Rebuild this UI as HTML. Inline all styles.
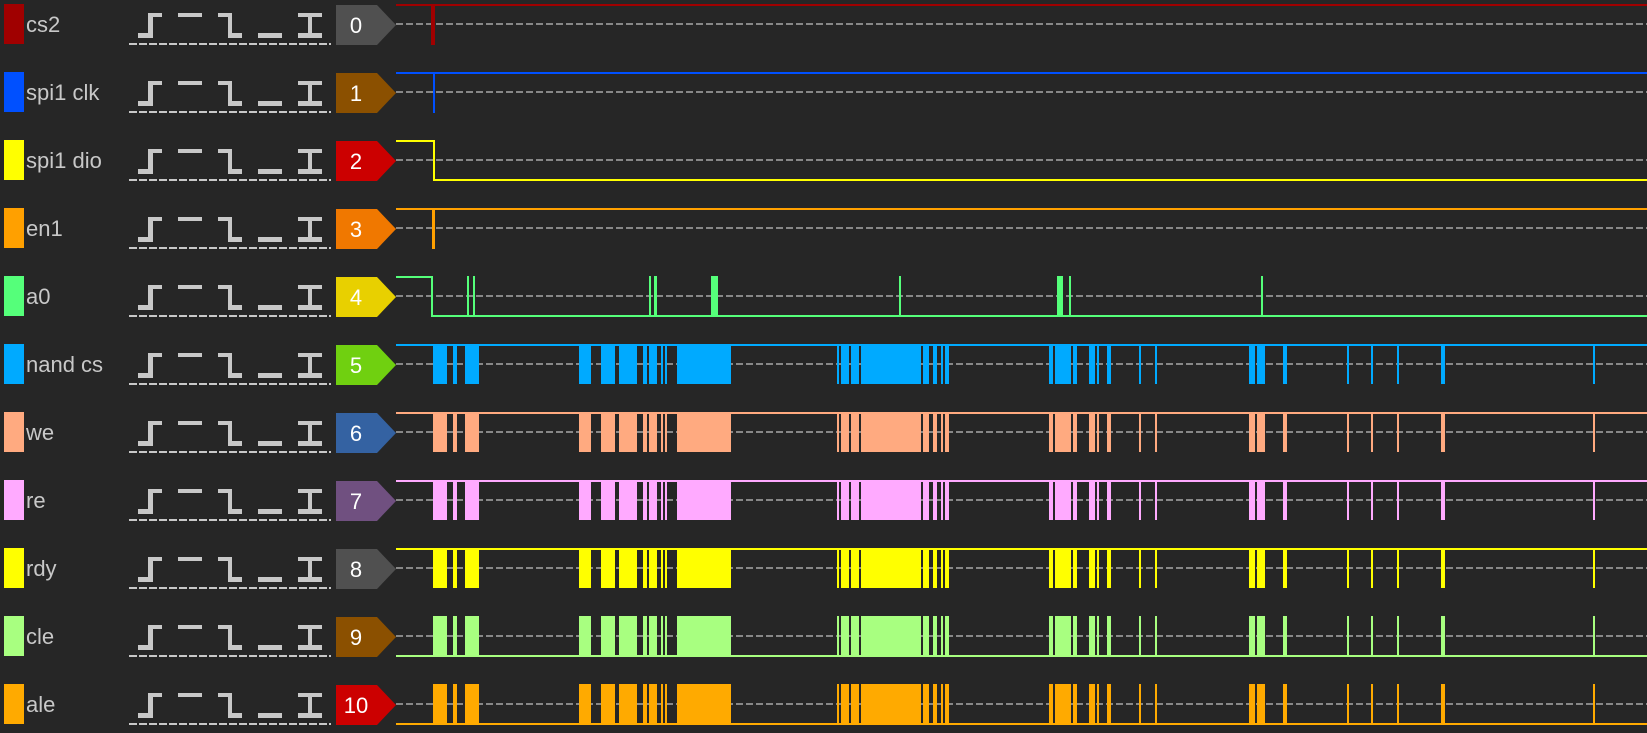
<!DOCTYPE html>
<html><head><meta charset="utf-8">
<style>
html,body{margin:0;padding:0;background:#262626;overflow:hidden}
svg{display:block}
text{font-family:"Liberation Sans","DejaVu Sans",sans-serif}
</style></head>
<body>
<svg width="1647" height="733" viewBox="0 0 1647 733" xmlns="http://www.w3.org/2000/svg">
<defs>
  <g id="ic" fill="#c8c8c8">
    <rect x="148" y="9" width="14" height="4"/><rect x="148" y="9" width="5" height="25"/><rect x="138" y="29" width="15" height="5"/>
    <rect x="178" y="9" width="24" height="4"/>
    <rect x="218" y="9" width="14" height="4"/><rect x="228" y="9" width="4" height="25"/><rect x="228" y="29" width="14" height="5"/>
    <rect x="258" y="29" width="24" height="5"/>
    <rect x="298" y="9" width="24" height="4"/><rect x="308" y="9" width="4" height="25"/><rect x="298" y="29" width="24" height="5"/>
    <line x1="129" y1="40" x2="331" y2="40" stroke="#c8c8c8" stroke-width="2" stroke-dasharray="8,2"/>
    <line x1="396" y1="20" x2="1647" y2="20" stroke="#888" stroke-width="2" stroke-dasharray="7,3"/>
  </g>
  <g id="b">
    <rect x="433" y="0" width="14" height="40"/><rect x="453" y="0" width="4" height="40"/><rect x="465" y="0" width="14" height="40"/>
    <rect x="579" y="0" width="12" height="40"/><rect x="601" y="0" width="14" height="40"/><rect x="619" y="0" width="18" height="40"/>
    <rect x="643" y="0" width="4" height="40"/><rect x="649" y="0" width="8" height="40"/><rect x="661" y="0" width="2" height="40"/><rect x="665" y="0" width="2" height="40"/>
    <rect x="677" y="0" width="54" height="40"/>
    <rect x="837" y="0" width="2" height="40"/><rect x="841" y="0" width="8" height="40"/><rect x="851" y="0" width="8" height="40"/><rect x="861" y="0" width="60" height="40"/>
    <rect x="923" y="0" width="6" height="40"/><rect x="933" y="0" width="4" height="40"/><rect x="941" y="0" width="2" height="40"/><rect x="945" y="0" width="4" height="40"/>
    <rect x="1049" y="0" width="4" height="40"/><rect x="1055" y="0" width="16" height="40"/><rect x="1073" y="0" width="4" height="40"/><rect x="1089" y="0" width="6" height="40"/>
    <rect x="1097" y="0" width="2" height="40"/><rect x="1107" y="0" width="4" height="40"/><rect x="1139" y="0" width="2" height="40"/><rect x="1155" y="0" width="2" height="40"/>
    <rect x="1249" y="0" width="6" height="40"/><rect x="1257" y="0" width="8" height="40"/><rect x="1283" y="0" width="4" height="40"/>
    <rect x="1347" y="0" width="2" height="40"/><rect x="1371" y="0" width="2" height="40"/><rect x="1397" y="0" width="2" height="40"/>
    <rect x="1441" y="0" width="4" height="40"/><rect x="1593" y="0" width="2" height="40"/>
  </g>
  <polygon id="bd" points="336,1 377,1 396,21 377,41 336,41"/>
</defs>

<g font-size="22" fill="#c8c8c8">
<g transform="translate(0,4)">
  <rect x="4" y="0" width="20" height="40" fill="#a00000"/><text x="26" y="28">cs2</text><use href="#ic"/>
  <use href="#bd" fill="#505050"/><text x="356" y="29" text-anchor="middle" fill="#fff">0</text>
  <rect x="396" y="0" width="1251" height="2" fill="#a00000"/><rect x="431" y="0" width="4" height="41" fill="#a00000"/>
</g>
<g transform="translate(0,72)">
  <rect x="4" y="0" width="20" height="40" fill="#0050ff"/><text x="26" y="28">spi1 clk</text><use href="#ic"/>
  <use href="#bd" fill="#8b5000"/><text x="356" y="29" text-anchor="middle" fill="#fff">1</text>
  <rect x="396" y="0" width="1251" height="2" fill="#0050ff"/><rect x="433" y="0" width="2" height="41" fill="#0050ff"/>
</g>
<g transform="translate(0,140)">
  <rect x="4" y="0" width="20" height="40" fill="#ffff00"/><text x="26" y="28">spi1 dio</text><use href="#ic"/>
  <use href="#bd" fill="#cc0000"/><text x="356" y="29" text-anchor="middle" fill="#fff">2</text>
  <polyline points="396,1 434,1 434,40 1647,40" fill="none" stroke="#ffff00" stroke-width="2"/>
</g>
<g transform="translate(0,208)">
  <rect x="4" y="0" width="20" height="40" fill="#ffa000"/><text x="26" y="28">en1</text><use href="#ic"/>
  <use href="#bd" fill="#f07800"/><text x="356" y="29" text-anchor="middle" fill="#fff">3</text>
  <rect x="396" y="0" width="1251" height="2" fill="#ffa000"/><rect x="432" y="0" width="3" height="41" fill="#ffa000"/>
</g>
<g transform="translate(0,276)">
  <rect x="4" y="0" width="20" height="40" fill="#55ff7a"/><text x="26" y="28">a0</text><use href="#ic"/>
  <use href="#bd" fill="#e8d000"/><text x="356" y="29" text-anchor="middle" fill="#fff">4</text>
  <g fill="#55ff7a">
    <polyline points="396,1 432,1 432,40 1647,40" fill="none" stroke="#55ff7a" stroke-width="2"/>
    <rect x="467" y="0" width="2" height="40"/><rect x="473" y="0" width="2" height="40"/>
    <rect x="649" y="0" width="2" height="40"/><rect x="654" y="0" width="3" height="40"/>
    <rect x="711" y="0" width="7" height="40"/><rect x="899" y="0" width="2" height="40"/>
    <rect x="1057" y="0" width="6" height="40"/><rect x="1069" y="0" width="2" height="40"/><rect x="1261" y="0" width="2" height="40"/>
  </g>
</g>
<g transform="translate(0,344)">
  <rect x="4" y="0" width="20" height="40" fill="#00aaff"/><text x="26" y="28">nand cs</text><use href="#ic"/>
  <use href="#bd" fill="#70d010"/><text x="356" y="29" text-anchor="middle" fill="#fff">5</text>
  <rect x="396" y="0" width="1251" height="2" fill="#00aaff"/><use href="#b" fill="#00aaff"/>
</g>
<g transform="translate(0,412)">
  <rect x="4" y="0" width="20" height="40" fill="#ffaa80"/><text x="26" y="28">we</text><use href="#ic"/>
  <use href="#bd" fill="#3462a2"/><text x="356" y="29" text-anchor="middle" fill="#fff">6</text>
  <rect x="396" y="0" width="1251" height="2" fill="#ffaa80"/><use href="#b" fill="#ffaa80"/>
</g>
<g transform="translate(0,480)">
  <rect x="4" y="0" width="20" height="40" fill="#ffaaff"/><text x="26" y="28">re</text><use href="#ic"/>
  <use href="#bd" fill="#705080"/><text x="356" y="29" text-anchor="middle" fill="#fff">7</text>
  <rect x="396" y="0" width="1251" height="2" fill="#ffaaff"/><use href="#b" fill="#ffaaff"/>
</g>
<g transform="translate(0,548)">
  <rect x="4" y="0" width="20" height="40" fill="#ffff00"/><text x="26" y="28">rdy</text><use href="#ic"/>
  <use href="#bd" fill="#505050"/><text x="356" y="29" text-anchor="middle" fill="#fff">8</text>
  <rect x="396" y="0" width="1251" height="2" fill="#ffff00"/><use href="#b" fill="#ffff00"/>
</g>
<g transform="translate(0,616)">
  <rect x="4" y="0" width="20" height="40" fill="#a8ff80"/><text x="26" y="28">cle</text><use href="#ic"/>
  <use href="#bd" fill="#8b5000"/><text x="356" y="29" text-anchor="middle" fill="#fff">9</text>
  <rect x="396" y="39" width="1251" height="2" fill="#a8ff80"/><use href="#b" fill="#a8ff80"/>
</g>
<g transform="translate(0,684)">
  <rect x="4" y="0" width="20" height="40" fill="#ffaa00"/><text x="26" y="28">ale</text><use href="#ic"/>
  <use href="#bd" fill="#cc0000"/><text x="356" y="29" text-anchor="middle" fill="#fff">10</text>
  <rect x="396" y="39" width="1251" height="2" fill="#ffaa00"/><use href="#b" fill="#ffaa00"/>
</g>
</g>
</svg>
</body></html>
